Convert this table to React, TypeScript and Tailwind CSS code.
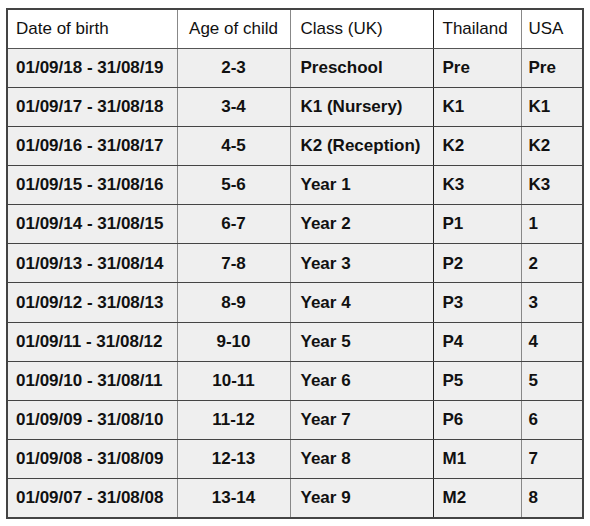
import React from "react";

const rows: [string, string, string, string, string][] = [
  ["01/09/18 - 31/08/19", "2-3", "Preschool", "Pre", "Pre"],
  ["01/09/17 - 31/08/18", "3-4", "K1 (Nursery)", "K1", "K1"],
  ["01/09/16 - 31/08/17", "4-5", "K2 (Reception)", "K2", "K2"],
  ["01/09/15 - 31/08/16", "5-6", "Year 1", "K3", "K3"],
  ["01/09/14 - 31/08/15", "6-7", "Year 2", "P1", "1"],
  ["01/09/13 - 31/08/14", "7-8", "Year 3", "P2", "2"],
  ["01/09/12 - 31/08/13", "8-9", "Year 4", "P3", "3"],
  ["01/09/11 - 31/08/12", "9-10", "Year 5", "P4", "4"],
  ["01/09/10 - 31/08/11", "10-11", "Year 6", "P5", "5"],
  ["01/09/09 - 31/08/10", "11-12", "Year 7", "P6", "6"],
  ["01/09/08 - 31/08/09", "12-13", "Year 8", "M1", "7"],
  ["01/09/07 - 31/08/08", "13-14", "Year 9", "M2", "8"],
];

export default function App() {
  return (
    <div className="w-[590px] h-[526px] bg-white pl-[6px] pt-[8px] font-['Liberation_Sans',Arial,sans-serif] text-[17px] text-[#111]">
      <table className="border-collapse border-2 border-[#444] table-fixed w-[576px]">
        <colgroup>
          <col className="w-[170px]" />
          <col className="w-[113px]" />
          <col className="w-[143px]" />
          <col className="w-[88px]" />
          <col className="w-[62px]" />
        </colgroup>
        <thead>
          <tr className="h-[39px] bg-white">
            <th className="font-normal text-left pl-[8px] pr-[4px] border border-[#555] border-r-[#888]">Date of birth</th>
            <th className="font-normal text-center px-[4px] border border-[#555] border-r-[#888]">Age of child</th>
            <th className="font-normal text-left pl-[10px] pr-[4px] border border-[#555] border-r-[#222]">Class (UK)</th>
            <th className="font-normal text-left pl-[9px] pr-[4px] border border-[#555] border-r-[#888]">Thailand</th>
            <th className="font-normal text-left pl-[7px] pr-[4px] border border-[#555]">USA</th>
          </tr>
        </thead>
        <tbody>
          {rows.map((r, i) => (
            <tr key={i} className="h-[39.17px] bg-[#efefef] font-bold">
              <td className="text-left pl-[8px] pr-[4px] border border-[#444] border-r-[#888]">{r[0]}</td>
              <td className="text-center px-[4px] border border-[#444] border-r-[#888]">{r[1]}</td>
              <td className="text-left pl-[10px] pr-[4px] border border-[#444] border-r-[#222]">{r[2]}</td>
              <td className="text-left pl-[9px] pr-[4px] border border-[#444] border-r-[#888]">{r[3]}</td>
              <td className="text-left pl-[7px] pr-[4px] border border-[#444]">{r[4]}</td>
            </tr>
          ))}
        </tbody>
      </table>
    </div>
  );
}
